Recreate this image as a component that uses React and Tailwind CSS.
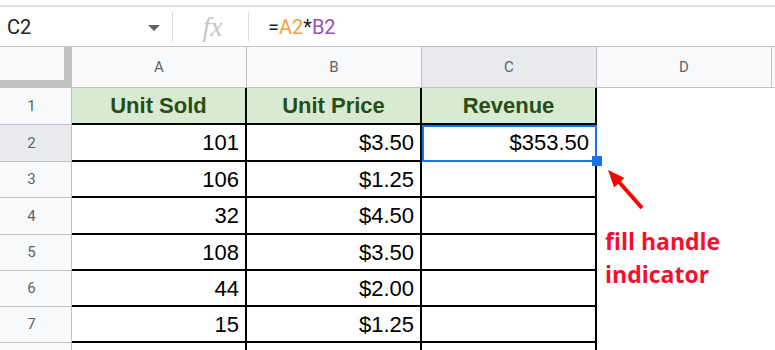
const cols = ["A", "B", "C", "D", ""];

const rows = [
  { n: 1, h: "h-[37px]", a: "Unit Sold", b: "Unit Price", c: "Revenue", head: true },
  { n: 2, h: "h-[37px]", a: "101", b: "$3.50", c: "$353.50", sel: true },
  { n: 3, h: "h-[36px]", a: "106", b: "$1.25", c: "" },
  { n: 4, h: "h-[37px]", a: "32", b: "$4.50", c: "" },
  { n: 5, h: "h-[36px]", a: "108", b: "$3.50", c: "" },
  { n: 6, h: "h-[36px]", a: "44", b: "$2.00", c: "" },
  { n: 7, h: "h-[36px]", a: "15", b: "$1.25", c: "" },
  { n: "", h: "h-[36px]", a: "", b: "", c: "" },
];

const ui = { fontFamily: "Roboto, 'Liberation Sans', Arial, sans-serif" };
const cellFont = { fontFamily: "'Liberation Sans', Arial, sans-serif" };

const Cell = ({ value, head, sel }) => (
  <div
    className={`relative w-[175px] shrink-0 flex items-center border-r-2 border-b-2 border-black ${
      head
        ? "justify-center bg-[#d9ead3] font-bold text-[#274e13]"
        : "justify-end pr-[6px] bg-white text-black"
    } text-[22px]`}
    style={cellFont}
  >
    {value}
    {sel && (
      <>
        <div className="absolute top-0 left-0 -right-[2px] -bottom-[2px] border-2 border-[#1a73e8]" />
        <div className="absolute -right-[7px] -bottom-[6px] w-[10px] h-[10px] bg-[#1a73e8] z-10" />
      </>
    )}
  </div>
);

export default function App() {
  return (
    <div className="relative w-[775px] h-[350px] overflow-hidden bg-white" style={ui}>
      <div className="h-[5px] bg-white" />

      {/* formula bar */}
      <div className="flex h-[42px] items-center border-t-2 border-b border-t-[#e0e0e4] border-b-[#c4c4c4]">
        <div className="w-[172px] shrink-0 flex items-center justify-between pl-[7px] pr-[12px]">
          <span className="text-[20px] text-[#202124]">C2</span>
          <svg width="12" height="6" viewBox="0 0 12 6" className="mt-[3px]">
            <path d="M0 0 L12 0 L6 6 Z" fill="#5f6368" />
          </svg>
        </div>
        <div className="w-px h-[31px] bg-[#dadce0]" />
        <div className="w-[75px] shrink-0 flex justify-center pl-[4px]">
          <span
            className="italic text-[28px] text-[#c4c7c9] leading-none"
            style={{ fontFamily: "'Liberation Serif', 'Times New Roman', serif" }}
          >
            fx
          </span>
        </div>
        <div className="w-px h-[29px] bg-[#dadce0]" />
        <div className="pl-[19px] text-[20px] text-[#202124]">
          =<span className="text-[#f59d3d]">A2</span>*<span className="text-[#9c4fb0]">B2</span>
        </div>
      </div>

      {/* column headers */}
      <div className="flex h-[41px] border-b border-[#c0c0c0]">
        <div className="w-[72px] shrink-0 bg-[#c2c2c2]">
          <div className="w-[64px] h-[33px] bg-[#f8f9fa]" />
        </div>
        {cols.map((c, i) => (
          <div
            key={i}
            className={`w-[175px] shrink-0 flex items-center justify-center border-r border-[#c0c0c0] text-[15px] text-[#5f6368] ${
              c === "C" ? "bg-[#e8eaed]" : "bg-[#f8f9fa]"
            }`}
          >
            {c}
          </div>
        ))}
      </div>

      {/* rows */}
      {rows.map((r, i) => (
        <div key={i} className={`flex ${r.h}`}>
          <div
            className={`w-[72px] shrink-0 flex items-center justify-center pr-[8px] border-r border-b border-[#c0c0c0] text-[15px] text-[#5f6368] ${
              r.sel ? "bg-[#e8eaed]" : "bg-[#f8f9fa]"
            }`}
          >
            {r.n}
          </div>
          <Cell value={r.a} head={r.head} />
          <Cell value={r.b} head={r.head} />
          <Cell value={r.c} head={r.head} sel={r.sel} />
          <div className="w-[175px] shrink-0 bg-white" />
        </div>
      ))}

      {/* annotation */}
      <svg className="absolute left-[600px] top-[162px]" width="50" height="52" viewBox="0 0 50 52">
        <path d="M8 8 L24.5 16 L14.1 25.4 Z" fill="#ff0000" />
        <line x1="19" y1="20" x2="42" y2="46" stroke="#ff0000" strokeWidth="4" />
      </svg>
      <div
        className="absolute left-[605px] top-[225px] text-[23px] leading-[33px] font-bold text-[#f80d2d]"
        style={{ fontFamily: "'Open Sans', 'DejaVu Sans', sans-serif" }}
      >
        fill handle
        <br />
        indicator
      </div>
    </div>
  );
}
